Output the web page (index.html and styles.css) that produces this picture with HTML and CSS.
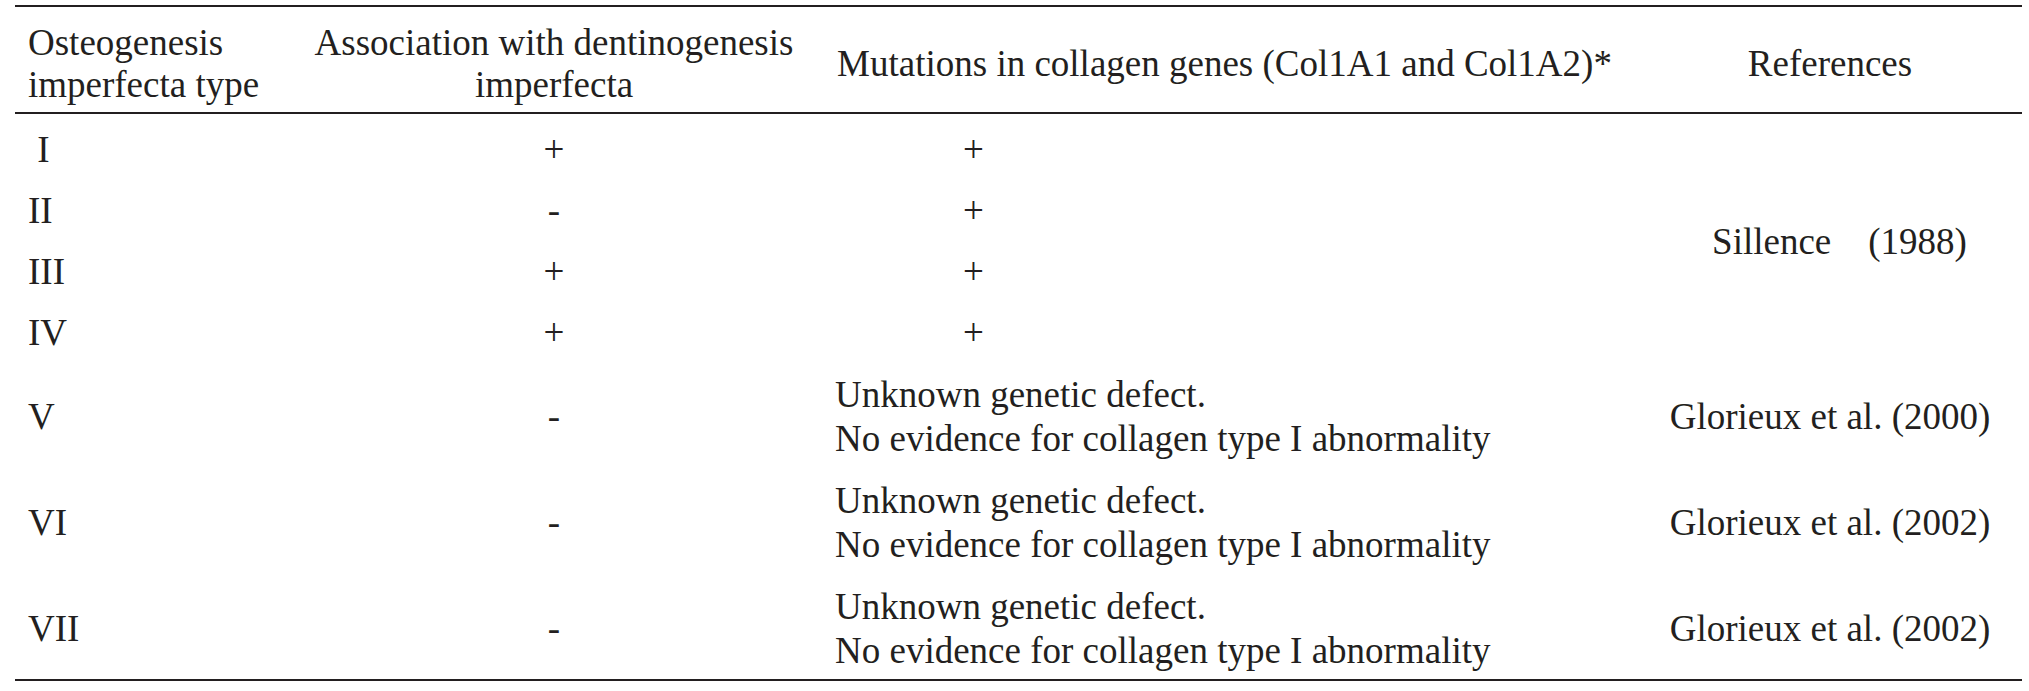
FILE: index.html
```html
<!DOCTYPE html>
<html lang="en">
<head>
<meta charset="utf-8">
<title>Osteogenesis imperfecta types</title>
<link rel="stylesheet" href="styles.css">
</head>
<body>
<table class="oi-table">
  <colgroup>
    <col class="c-type">
    <col class="c-assoc">
    <col class="c-mut">
    <col class="c-ref">
  </colgroup>
  <thead>
    <tr>
      <th class="h-type">Osteogenesis<br>imperfecta type</th>
      <th class="h-center">Association with dentinogenesis<br>imperfecta</th>
      <th class="h-center">Mutations in collagen genes (Col1A1 and Col1A2)*</th>
      <th class="h-center">References</th>
    </tr>
  </thead>
  <tbody>
    <tr class="r-short r-first">
      <td class="d-type">&nbsp;I</td>
      <td class="d-assoc">+</td>
      <td class="d-mut"><span class="plus">+</span></td>
      <td class="d-ref d-sillence" rowspan="4">Sillence&nbsp;&nbsp;&nbsp; (1988)</td>
    </tr>
    <tr class="r-short">
      <td class="d-type">II</td>
      <td class="d-assoc">-</td>
      <td class="d-mut"><span class="plus">+</span></td>
    </tr>
    <tr class="r-short">
      <td class="d-type">III</td>
      <td class="d-assoc">+</td>
      <td class="d-mut"><span class="plus">+</span></td>
    </tr>
    <tr class="r-short">
      <td class="d-type">IV</td>
      <td class="d-assoc">+</td>
      <td class="d-mut"><span class="plus">+</span></td>
    </tr>
    <tr class="r-tall">
      <td class="d-type">V</td>
      <td class="d-assoc">-</td>
      <td class="d-mut">Unknown genetic defect.<br>No evidence for collagen type I abnormality</td>
      <td class="d-ref">Glorieux et al. (2000)</td>
    </tr>
    <tr class="r-tall">
      <td class="d-type">VI</td>
      <td class="d-assoc">-</td>
      <td class="d-mut">Unknown genetic defect.<br>No evidence for collagen type I abnormality</td>
      <td class="d-ref">Glorieux et al. (2002)</td>
    </tr>
    <tr class="r-tall r-last">
      <td class="d-type">VII</td>
      <td class="d-assoc">-</td>
      <td class="d-mut">Unknown genetic defect.<br>No evidence for collagen type I abnormality</td>
      <td class="d-ref">Glorieux et al. (2002)</td>
    </tr>
  </tbody>
</table>
</body>
</html>
```

FILE: styles.css
```css
html, body {
  margin: 0;
  padding: 0;
  background: #ffffff;
}

.oi-table {
  margin: 5px 0 0 15px;
  width: 2007px;
  table-layout: fixed;
  border-collapse: collapse;
  border-top: 2px solid #231f20;
  border-bottom: 2px solid #231f20;
  font-family: "Liberation Serif", "Times New Roman", serif;
  font-size: 37px;
  color: #231f20;
}

.c-type { width: 282px; }
.c-assoc { width: 514px; }
.c-mut { width: 827px; }
.c-ref { width: 384px; }

.oi-table th,
.oi-table td {
  white-space: nowrap;
  vertical-align: middle;
  font-weight: normal;
}

.oi-table thead th {
  line-height: 42px;
  padding: 15px 0 6px 0;
  border-bottom: 2px solid #231f20;
}

.h-type {
  text-align: left;
  padding-left: 13px !important;
}

.h-center {
  text-align: center;
}

.r-short td {
  line-height: 42px;
  padding: 10px 0 9px 0;
}

.r-first td {
  padding-top: 15px;
}

.r-tall td {
  line-height: 44px;
  padding: 10px 0 8px 0;
}

.r-last td {
  padding-bottom: 6px;
}

.d-type {
  text-align: left;
  padding-left: 13px !important;
}

.d-assoc {
  text-align: center;
}

.d-mut {
  text-align: left;
  padding-left: 24px !important;
}

.plus {
  display: inline-block;
  margin-left: 128px;
}

.d-ref {
  text-align: center;
}

.oi-table td.d-sillence {
  padding: 6px 0 0 19px;
  line-height: 42px;
}
```
